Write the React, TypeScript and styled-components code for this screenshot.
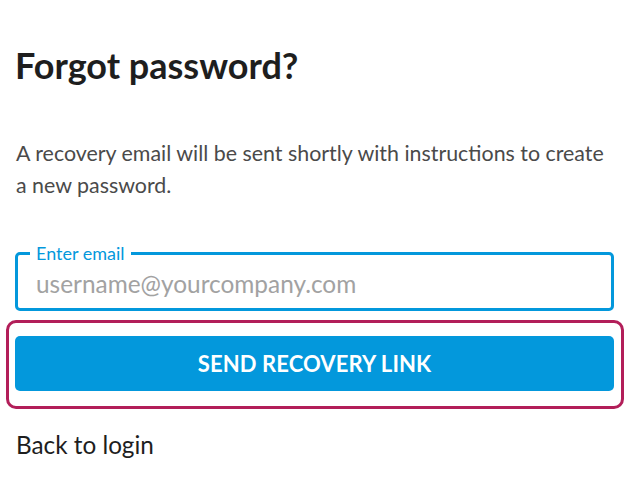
import styled, { createGlobalStyle } from "styled-components";

const GlobalStyle = createGlobalStyle`
  html, body {
    margin: 0;
    padding: 0;
    background: #ffffff;
  }
  body {
    font-family: Lato, "Open Sans", sans-serif;
  }
`;

const Page = styled.main`
  width: 599px;
  padding: 43px 0 0 15px;
  display: flex;
  flex-direction: column;
`;

const Title = styled.h1`
  margin: 0;
  font-size: 36px;
  line-height: 44px;
  font-weight: 700;
  color: #1e1e1e;
`;

const Intro = styled.p`
  max-width: 598px;
  margin: 50px 0 0 1px;
  font-size: 21.4px;
  line-height: 32px;
  color: #4a4a4a;
`;

const Field = styled.fieldset`
  margin: 41px 0 0;
  padding: 0 12px 4px;
  border: 3px solid #0398dc;
  border-radius: 5px;
`;

const Legend = styled.legend`
  padding: 0 6px;
  font-size: 18px;
  line-height: 22px;
  color: #0398dc;
`;

const Input = styled.input`
  width: 100%;
  box-sizing: border-box;
  height: 40px;
  padding: 0 6px 2px;
  border: none;
  outline: none;
  font-family: Lato, sans-serif;
  font-size: 24.4px;
  color: #222;
  caret-color: #222;
  background: transparent;

  &::placeholder {
    color: #a2a2a2;
  }
`;

const FocusRing = styled.div`
  margin: 9px -10px 0 -9px;
  padding: 13px 7px 15px 6px;
  border: 3px solid #b21e59;
  border-radius: 10px;
`;

const Button = styled.button`
  width: 100%;
  height: 55px;
  border: none;
  border-radius: 5px;
  background: #0398dc;
  color: #ffffff;
  font-family: Lato, sans-serif;
  font-size: 22px;
  font-weight: 700;
  letter-spacing: 0.1px;
  text-transform: uppercase;
  cursor: pointer;
`;

const BackLink = styled.a`
  margin: 22px 0 0 1px;
  font-size: 24.3px;
  line-height: 28px;
  color: #1e1e1e;
  text-decoration: none;
  cursor: pointer;
`;

export default function App() {
  return (
    <>
      <GlobalStyle />
      <Page>
        <Title>Forgot password?</Title>
        <Intro>
          A recovery email will be sent shortly with instructions to create a
          new password.
        </Intro>
        <Field>
          <Legend>Enter email</Legend>
          <Input type="email" placeholder="username@yourcompany.com" autoFocus />
        </Field>
        <FocusRing>
          <Button type="button">Send recovery link</Button>
        </FocusRing>
        <BackLink>Back to login</BackLink>
      </Page>
    </>
  );
}
